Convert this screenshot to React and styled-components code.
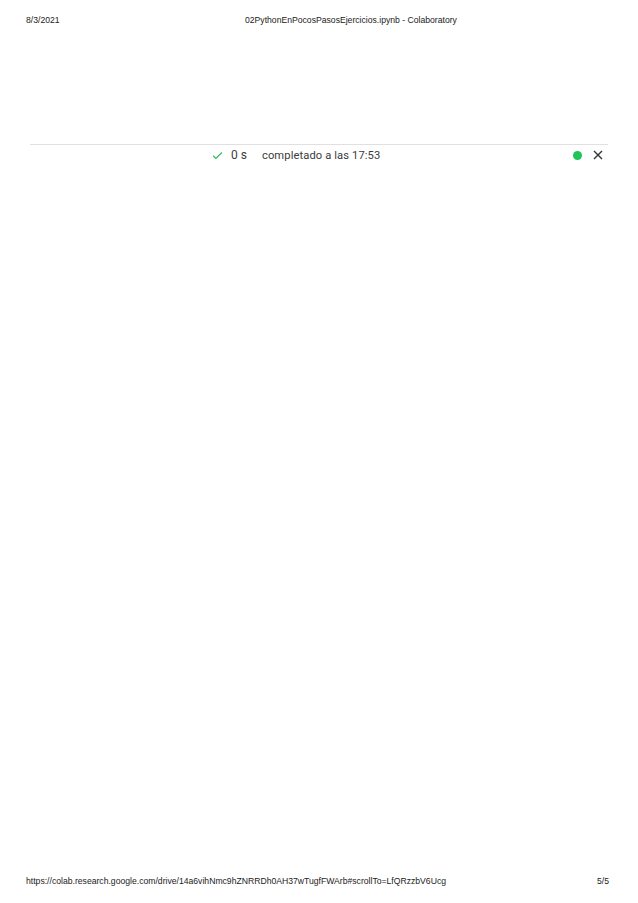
import React from "react";
import styled, { createGlobalStyle } from "styled-components";

const Global = createGlobalStyle`
  html, body { margin: 0; padding: 0; background: #fff; }
  body { font-family: "Liberation Sans", Arial, sans-serif; }
`;

const Page = styled.div`
  width: 638px;
  height: 903px;
  display: flex;
  flex-direction: column;
  position: relative;
  overflow: hidden;
`;

const PrintBar = styled.div`
  display: grid;
  grid-template-columns: 1fr auto 1fr;
  align-items: center;
  padding: 0 29px 0 26px;
  height: 14px;
  font-size: 8.65px;
  color: #222;
  margin-top: ${(p) => p.$top}px;
  .right { justify-self: end; }
`;

const Header = styled(PrintBar)`
  grid-template-columns: 219px auto 1fr;
`;

const Footer = styled(PrintBar)`
  grid-template-columns: 1fr auto;
  margin-top: auto;
  margin-bottom: 15px;
`;

const Cell = styled.div`
  margin: 117px 30px 0 30px;
  border-top: 1px solid #e0e0e0;
`;

const StatusRow = styled.div`
  height: 20px;
  display: flex;
  align-items: center;
  font-family: Roboto, "Noto Sans", sans-serif;
  font-size: 12px;
  color: #3c3c3c;
  padding-left: 181px;
`;

const Check = styled.svg`
  width: 13px;
  height: 13px;
  margin-right: 7px;
`;

const Time = styled.span`
  margin-right: 15px;
`;

const Message = styled.span`
  font-size: 11.2px;
  letter-spacing: 0.1px;
`;

const Spacer = styled.div`
  flex: 1;
`;

const Dot = styled.span`
  width: 9px;
  height: 9px;
  border-radius: 50%;
  background: #1fc45a;
  margin-right: 11px;
`;

const Close = styled.svg`
  width: 10px;
  height: 10px;
  margin-right: 5px;
`;

export default function App() {
  return (
    <Page>
      <Global />
      <Header $top={13}>
        <span>8/3/2021</span>
        <span>02PythonEnPocosPasosEjercicios.ipynb - Colaboratory</span>
        <span />
      </Header>
      <Cell>
        <StatusRow>
          <Check viewBox="0 0 24 24">
            <path d="M4 12.5l5 5L20 6.5" fill="none" stroke="#2fbf5a" strokeWidth="2.2" />
          </Check>
          <Time>0 s</Time>
          <Message>completado a las 17:53</Message>
          <Spacer />
          <Dot />
          <Close viewBox="0 0 10 10">
            <path d="M1 1L9 9M9 1L1 9" stroke="#333" strokeWidth="1.4" />
          </Close>
        </StatusRow>
      </Cell>
      <Footer>
        <span>https://colab.research.google.com/drive/14a6vihNmc9hZNRRDh0AH37wTugfFWArb#scrollTo=LfQRzzbV6Ucg</span>
        <span className="right">5/5</span>
      </Footer>
    </Page>
  );
}
